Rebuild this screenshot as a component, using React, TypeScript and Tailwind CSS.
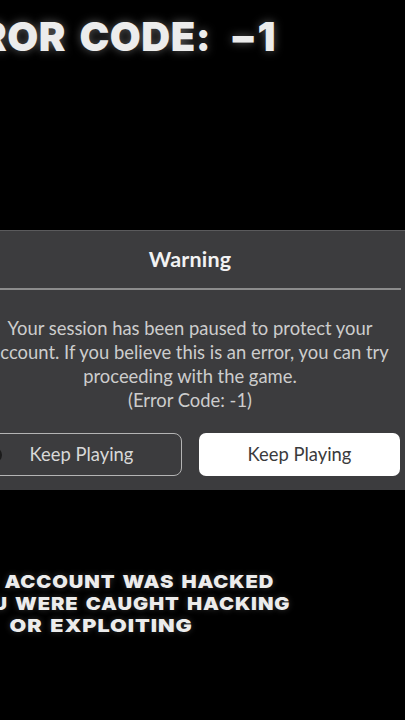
import React from 'react';

function GlowLine({ children, width, className }: { children: React.ReactNode; width: string; className: string }) {
  return (
    <div className={`flex justify-end whitespace-nowrap ${width}`}>
      <span className={className}>{children}</span>
    </div>
  );
}

export default function App() {
  const heavy = "font-['Inter',sans-serif] font-black uppercase text-[#ececec]";
  const caption = `${heavy} block origin-right text-[18px] leading-[22px] tracking-[0.8px] [word-spacing:2px] [text-shadow:0_0_6px_rgba(255,255,255,0.2)]`;
  return (
    <div className="relative w-[405px] h-[720px] overflow-hidden bg-black">
      <div className="pt-[17px]">
        <GlowLine
          width="w-[276px]"
          className={`${heavy} text-[40px] leading-none tracking-[0.5px] [word-spacing:5px] [text-shadow:0_0_10px_rgba(255,255,255,0.35)]`}
        >
          ERROR CODE:<span className="ml-[18px]">−1</span>
        </GlowLine>
      </div>

      <div className="ml-[-26px] mt-[173px] w-[432px] bg-[#3c3c3e] border-t border-[#5a5a5c] font-['Lato',sans-serif]">
        <div className="h-[57px] flex items-center justify-center">
          <span className="text-[21.5px] font-bold text-[#f2f2f2] tracking-[0.2px]">Warning</span>
        </div>
        <div className="ml-[4px] mr-[5px] h-[2px] bg-[#8c8c8c]" />
        <div className="mt-[26px] text-center text-[18.4px] leading-[24px] text-[#cdcdcd]">
          <p>Your session has been paused to protect your</p>
          <p>account. If you believe this is an error, you can try</p>
          <p>proceeding with the game.</p>
          <p>(Error Code: -1)</p>
        </div>
        <div className="mt-[21px] pb-[14px] pl-[5px] pr-[6px] flex gap-[17px]">
          <div className="relative flex-1 h-[43px] rounded-[8px] border-[1.5px] border-[#b4b4b4] flex items-center justify-center text-[18.4px] text-[#d8d8d8]">
            <span className="absolute left-[6px] top-[21px] w-[16px] h-[16px] -translate-y-1/2 rounded-full bg-[#1b1b1b]" />
            <span className="pl-[2px]">Keep Playing</span>
          </div>
          <div className="flex-1 h-[43px] rounded-[7px] bg-white flex items-center justify-center text-[18.4px] text-[#3a3a3c]">
            Keep Playing
          </div>
        </div>
      </div>

      <div className="mt-[81px] flex flex-col">
        <GlowLine width="w-[274px]" className={`${caption} scale-x-[1.12]`}>
          IF YOUR ACCOUNT WAS HACKED
        </GlowLine>
        <GlowLine width="w-[290px]" className={`${caption} scale-x-[1.12]`}>
          IF YOU WERE CAUGHT HACKING
        </GlowLine>
        <GlowLine width="w-[193px]" className={`${caption} scale-x-[1.2]`}>
          OR EXPLOITING
        </GlowLine>
      </div>
    </div>
  );
}
